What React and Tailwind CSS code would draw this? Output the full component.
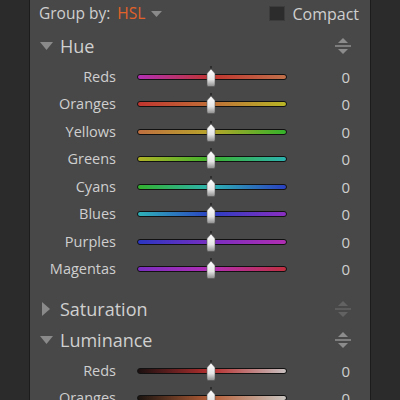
import React from "react";

const hue = [
  { name: "Reds", g: "linear-gradient(to right, #b22fb4, #c0352f 50%, #c0704a)" },
  { name: "Oranges", g: "linear-gradient(to right, #c0352f, #c07038 50%, #b8b626)" },
  { name: "Yellows", g: "linear-gradient(to right, #c07040, #b8a62a 50%, #33b22a)" },
  { name: "Greens", g: "linear-gradient(to right, #b0b226, #3cb22e 50%, #2cb2b0)" },
  { name: "Cyans", g: "linear-gradient(to right, #33b22e, #2eb2b2 50%, #2a40c0)" },
  { name: "Blues", g: "linear-gradient(to right, #2eb2b8, #2a3ec2 50%, #8a2ec0)" },
  { name: "Purples", g: "linear-gradient(to right, #2a36c2, #7a2ec0 50%, #b02eb2)" },
  { name: "Magentas", g: "linear-gradient(to right, #7a2ec0, #b22eb4 50%, #c03040)" },
];

const lum = [
  { name: "Reds", g: "linear-gradient(to right, #1a1010, #b83030 50%, #c8c0c0)" },
  { name: "Oranges", g: "linear-gradient(to right, #1a1410, #b86038 50%, #c8c4c0)" },
];

function Thumb() {
  return (
    <svg width="10" height="22" viewBox="0 0 10 22" className="absolute left-[69px] top-[-8px]">
      <defs>
        <linearGradient id="tg" x1="0" y1="0" x2="0" y2="1">
          <stop offset="0" stopColor="#ffffff" />
          <stop offset="0.6" stopColor="#e4e4e4" />
          <stop offset="1" stopColor="#8c8c8c" />
        </linearGradient>
      </defs>
      <rect x="4.5" y="0" width="1" height="2.5" fill="#111" />
      <path d="M5 3 L9 7.5 L9 19 Q9 20.5 7.5 20.5 L2.5 20.5 Q1 20.5 1 19 L1 7.5 Z" fill="url(#tg)" stroke="#555" strokeWidth="0.6" />
    </svg>
  );
}

function Row({ name, g }) {
  return (
    <div className="flex items-center h-[27.5px]">
      <div className="w-[86px] text-right text-[14.5px] text-[#cfcfcf]">{name}</div>
      <div className="relative ml-[21px] w-[150px] h-[6px]">
        <div className="absolute inset-0 rounded-full border border-[#111]" style={{ background: g }} />
        <Thumb />
      </div>
      <div className="flex-1 text-right pr-[20px] text-[15px] text-[#cfcfcf]">0</div>
    </div>
  );
}

function ArrowsIcon({ dim }) {
  const c = dim ? "#626262" : "#8c8c8c";
  return (
    <svg width="18" height="18" viewBox="0 0 18 18">
      <path d="M9 1 L14 6 L4 6 Z" fill={c} />
      <path d="M9 17 L14 12 L4 12 Z" fill={c} />
      <rect x="1" y="8.2" width="16" height="1.6" fill={c} />
    </svg>
  );
}

function Section({ title, open, dim, rows }) {
  return (
    <div>
      <div className="flex items-center h-[30px] pl-[10px] pr-[18px]">
        {open ? (
          <svg width="13" height="9" viewBox="0 0 13 9"><path d="M0 0 L13 0 L6.5 8 Z" fill="#8a8a8a" /></svg>
        ) : (
          <svg width="13" height="14" viewBox="0 0 13 14"><path d="M2 0 L10 7 L2 14 Z" fill="#8a8a8a" /></svg>
        )}
        <span className="ml-[7px] text-[18px] text-[#d0d0d0]">{title}</span>
        <div className="ml-auto"><ArrowsIcon dim={dim} /></div>
      </div>
      {open && rows && (
        <div className="pt-[2px]">
          {rows.map((r) => <Row key={r.name} {...r} />)}
        </div>
      )}
    </div>
  );
}

export default function App() {
  return (
    <div className="w-[400px] h-[400px] overflow-hidden flex bg-[#2b2b2b]" style={{ fontFamily: '"Open Sans", sans-serif' }}>
      <div className="w-[29px] shrink-0 bg-[#2b2b2b]" />
      <div className="w-[342px] shrink-0 bg-[#484848] border-l border-r border-[#1c1c1c]">
        <div className="flex items-center h-[27px] pl-[9px] pr-[11px]">
          <span className="text-[15.5px] text-[#cfcfcf]">Group by:</span>
          <span className="ml-[7px] text-[15.5px] text-[#e2622a]">HSL</span>
          <svg width="11" height="6" viewBox="0 0 11 6" className="ml-[6px]"><path d="M0 0 L11 0 L5.5 6 Z" fill="#8a8a8a" /></svg>
          <div className="ml-auto w-[16px] h-[15px] bg-[#2c2c2c] border border-[#3c3c3c]" />
          <span className="ml-[7px] text-[16px] text-[#cfcfcf]">Compact</span>
        </div>
        <div className="mt-[4px]">
          <Section title="Hue" open rows={hue} />
        </div>
        <div className="mt-[11px]">
          <Section title="Saturation" dim />
          <div className="mt-[1px]">
            <Section title="Luminance" open rows={lum} />
          </div>
        </div>
      </div>
      <div className="flex-1 bg-[#2b2b2b]" />
    </div>
  );
}
